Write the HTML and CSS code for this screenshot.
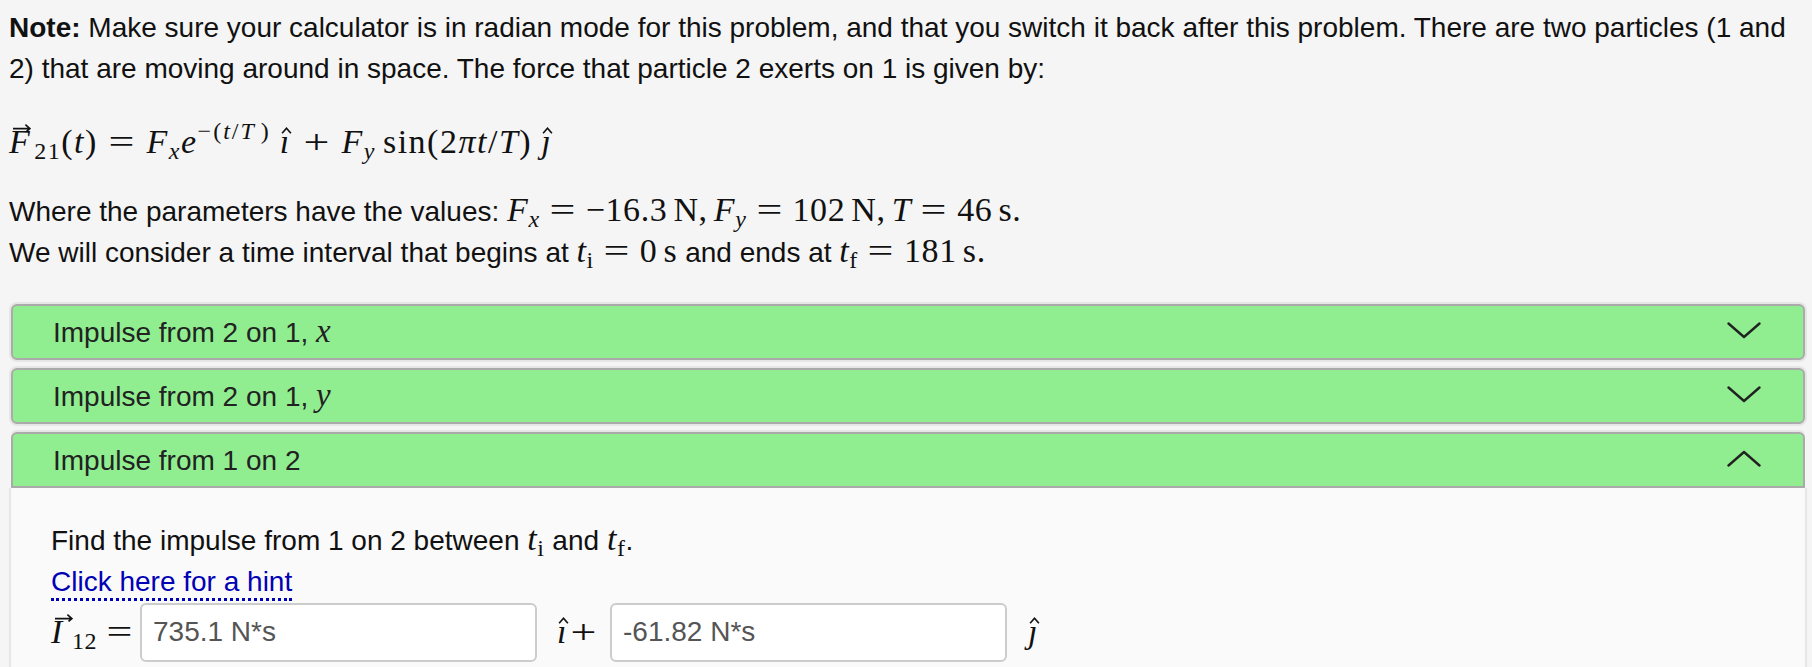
FILE: index.html
```html
<!DOCTYPE html>
<html lang="en">
<head>
<meta charset="utf-8">
<title>Impulse problem</title>
<link rel="stylesheet" href="styles.css">
</head>
<body>
<main class="page">
  <p class="intro"><strong>Note:</strong> Make sure your calculator is in radian mode for this problem, and that you switch it back after this problem. There are two particles (1 and 2) that are moving around in space. The force that particle 2 exerts on 1 is given by:</p>
  <p class="equation math"><span class="vec"><i>F</i><svg class="arrow" viewBox="0 0 16 8"><path d="M0 5H15M11 1.5L15 5L12 7.5"/></svg></span><sub class="up">21</sub>(<i>t</i>) <span class="op">=</span> <i>F</i><sub><i>x</i></sub><i>e</i><sup>−(<i>t</i>/<i>T</i> )</sup> <span class="hat"><i>ı</i><svg class="caret" viewBox="0 0 10 6"><path d="M1 5.5L5 1L9 5.5"/></svg></span> <span class="op">+</span> <i>F</i><sub><i>y</i></sub> sin(2<i>π</i><i>t</i>/<i>T</i>) <span class="hat"><i>ȷ</i><svg class="caret" viewBox="0 0 10 6"><path d="M1 5.5L5 1L9 5.5"/></svg></span></p>
  <p class="params">Where the parameters have the values: <span class="math"><i>F</i><sub><i>x</i></sub> <span class="op">=</span> −16.3 N, <i>F</i><sub><i>y</i></sub> <span class="op">=</span> 102 N, <i>T</i> <span class="op">=</span> 46 s.</span><br>
  We will consider a time interval that begins at <span class="math"><i>t</i><sub>i</sub> <span class="op">=</span> 0 s</span> and ends at <span class="math"><i>t</i><sub>f</sub> <span class="op">=</span> 181 s.</span></p>

  <section class="accordion">
    <div class="head">
      <span class="title">Impulse from 2 on 1, <i class="math">x</i></span>
      <svg class="chev" viewBox="0 0 34 20"><path d="M1.5 1.5L17 15L32.5 1.5"/></svg>
    </div>
    <div class="head">
      <span class="title">Impulse from 2 on 1, <i class="math">y</i></span>
      <svg class="chev" viewBox="0 0 34 20"><path d="M1.5 1.5L17 15L32.5 1.5"/></svg>
    </div>
    <div class="item open">
      <div class="head">
        <span class="title">Impulse from 1 on 2</span>
        <svg class="chev" viewBox="0 0 34 20"><path d="M1.5 15.5L17 2L32.5 15.5"/></svg>
      </div>
      <div class="panel">
        <p class="find">Find the impulse from 1 on 2 between <span class="math"><i>t</i><sub>i</sub></span> and <span class="math"><i>t</i><sub>f</sub></span>.</p>
        <p class="hint"><a href="#">Click here for a hint</a></p>
        <div class="answer">
          <span class="math label"><span class="vec"><i>I</i><svg class="arrow" viewBox="0 0 16 8"><path d="M0 5H15M11 1.5L15 5L12 7.5"/></svg></span><sub class="wide">12</sub> <span class="op">=</span></span>
          <input class="field" type="text" value="735.1 N*s">
          <span class="math unit"><span class="hat"><i>ı</i><svg class="caret" viewBox="0 0 10 6"><path d="M1 5.5L5 1L9 5.5"/></svg></span><span class="op plus">+</span></span>
          <input class="field" type="text" value="-61.82 N*s">
          <span class="math jhat"><span class="hat"><i>ȷ</i><svg class="caret" viewBox="0 0 10 6"><path d="M1 5.5L5 1L9 5.5"/></svg></span></span>
        </div>
      </div>
    </div>
  </section>
</main>
</body>
</html>
```
FILE: styles.css
```css
* { box-sizing: border-box; }
html, body { margin: 0; height: 667px; overflow: hidden; }
body {
  background: #f5f5f5;
  color: #111;
  font-family: "Liberation Sans", Arial, sans-serif;
  font-size: 28px;
  line-height: 40.5px;
}
.page { padding: 8px 6px 0 9px; }
p { margin: 0; }
.intro { width: 1790px; }
.math {
  font-family: "Liberation Serif", "Times New Roman", serif;
  font-size: 34px;
  line-height: 0;
  letter-spacing: 0.6px;
  word-spacing: -3px;
}
.math sub { font-size: 24px; line-height: 0; vertical-align: -6px; }
.math sup { font-size: 24px; line-height: 0; vertical-align: 14px; letter-spacing: 2px; }
.math .up { margin-left: 3px; }
.math .wide { margin-left: 9px; }
.op { display: inline-block; margin: 0 7px; transform: scaleX(1.35); }
.hat { position: relative; display: inline-block; line-height: 1; margin: 0 2px; }
.caret { position: absolute; left: 1px; top: 2px; width: 11px; height: 7px; }
.caret path { fill: none; stroke: #111; stroke-width: 1.5; }
.equation { margin-top: 33px; height: 40px; line-height: 40px; white-space: nowrap; letter-spacing: 1.5px; }
.params { margin-top: 30px; white-space: nowrap; }
.vec { position: relative; display: inline-block; line-height: 1; }
.arrow { position: absolute; left: 4px; top: -2px; width: 18px; height: 9px; }
.arrow path { fill: none; stroke: #111; stroke-width: 1.4; }

.accordion { margin: 31px 0 0; width: 1798px; }
.head {
  display: flex;
  align-items: center;
  justify-content: space-between;
  height: 56px;
  margin: 0 2px 8px;
  padding: 0 42px 0 40px;
  background: #90ee90;
  border: 2px solid #aaa;
  border-radius: 6px;
  box-shadow: 0 0 0 2px #e6e6e6;
  color: #222;
}
.title { padding-top: 3px; }
.head .math { font-size: 33px; }
.chev { width: 34px; height: 20px; }
.chev path { fill: none; stroke: #222; stroke-width: 2.4; stroke-linecap: round; stroke-linejoin: round; }
.item.open .head { margin-bottom: 0; border-radius: 6px 6px 0 0; box-shadow: 0 -2px 0 0 #e6e6e6; }
.panel {
  height: 180px;
  padding: 33px 40px 0;
  background: #fafafa;
  border-left: 2px solid #e6e6e6;
  border-right: 2px solid #e6e6e6;
}
.hint { height: 41px; }
.hint a { color: #0000b4; text-decoration: none; border-bottom: 3px dotted #0000b4; padding-bottom: 1px; }
.answer { display: flex; align-items: center; height: 59px; }
.label { width: 89px; flex: none; white-space: nowrap; }
.field {
  width: 397px;
  flex: none;
  height: 59px;
  padding: 0 11px;
  background: #fff;
  border: 2px solid #ccc;
  border-radius: 6px;
  color: #555;
  font: 28px "Liberation Sans", Arial, sans-serif;
}
.unit { width: 73px; flex: none; padding-left: 18px; white-space: nowrap; }
.plus { margin: 0 0 0 5px; }
.jhat { margin-left: 19px; }
```
